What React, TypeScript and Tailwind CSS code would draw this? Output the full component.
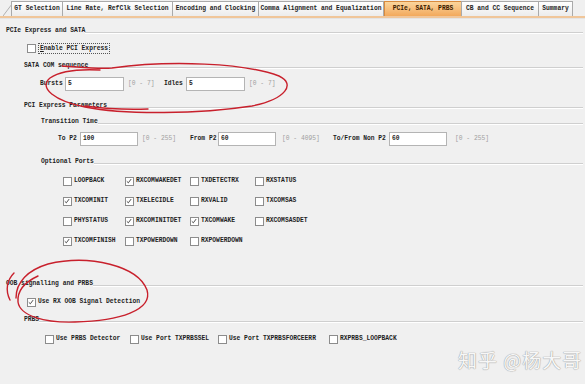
import React from 'react';

const font = { fontFamily: '"Liberation Mono", "DejaVu Sans Mono", monospace' };

const tabs = [
  { label: 'GT Selection', w: 52 },
  { label: 'Line Rate, RefClk Selection', w: 111 },
  { label: 'Encoding and Clocking', w: 87 },
  { label: 'Comma Alignment and Equalization', w: 126 },
  { label: 'PCIe, SATA, PRBS', w: 78, active: true },
  { label: 'CB and CC Sequence', w: 78 },
  { label: 'Summary', w: 35 },
];

function Box({ checked }: { checked?: boolean }) {
  return (
    <span className="relative inline-block w-[9px] h-[9px] shrink-0 border border-[#8c8c8c] bg-white">
      {checked && (
        <svg viewBox="0 0 9 9" className="absolute inset-0 w-[7px] h-[7px]">
          <path d="M1 4.2 L3 6.2 L6.6 1.4" fill="none" stroke="#333" strokeWidth="1.1" />
        </svg>
      )}
    </span>
  );
}

function Check({ label, checked }: { label: string; checked?: boolean }) {
  return (
    <div className="flex items-center gap-[2px] h-[12px]">
      <Box checked={checked} />
      <span className="whitespace-nowrap">{label}</span>
    </div>
  );
}

function Header({ title, indent, className = '' }: { title: string; indent: string; className?: string }) {
  return (
    <div className={`flex items-end h-[12px] pr-[2px] ${indent} ${className}`}>
      <span className="whitespace-nowrap leading-[12px]">{title}</span>
      <div className="flex-1 mb-[3px] border-t border-[#cfcfcf] border-b border-b-white" />
    </div>
  );
}

function Field({ value, w }: { value: string; w: string }) {
  return (
    <div className={`${w} h-[14px] bg-white border border-[#b4b4b4] pl-[2px] leading-[12px]`}>{value}</div>
  );
}

const ports: [string, boolean][][] = [
  [['LOOPBACK', false], ['RXCOMWAKEDET', true], ['TXDETECTRX', false], ['RXSTATUS', false]],
  [['TXCOMINIT', true], ['TXELECIDLE', true], ['RXVALID', false], ['TXCOMSAS', false]],
  [['PHYSTATUS', false], ['RXCOMINITDET', true], ['TXCOMWAKE', true], ['RXCOMSASDET', false]],
  [['TXCOMFINISH', true], ['TXPOWERDOWN', false], ['RXPOWERDOWN', false]],
];

export default function App() {
  return (
    <div
      className="relative w-[585px] h-[384px] overflow-hidden bg-[#f0f0f0] text-[6.3px] font-semibold text-[#1e1e1e]"
      style={font}
    >
      {/* tab strip */}
      <div className="flex items-end h-[18px] pl-[3px] border-b-2 border-[#f0c69a]">
        <div className="w-[9px] h-[15px] relative">
          <svg viewBox="0 0 9 15" className="absolute inset-0">
            <path d="M0 15 L9 3" stroke="#b0b0b0" strokeWidth="1" />
          </svg>
        </div>
        {tabs.map((t) => (
          <div
            key={t.label}
            className={`h-[15px] flex items-center justify-center border border-b-0 whitespace-nowrap ${
              t.active
                ? 'bg-gradient-to-b from-[#fbd59c] to-[#f2a95c] border-[#d98b3e] font-extrabold text-[#3a1a00]'
                : 'bg-gradient-to-b from-white to-[#ececec] border-[#aaaaaa] -ml-px'
            }`}
            style={{ width: t.w }}
          >
            {t.label}
          </div>
        ))}
      </div>
      <div className="h-px bg-[#e4e4e4]" />

      <Header title="PCIe Express and SATA" indent="pl-[6px]" className="mt-[6px]" />
      <div className="flex items-center gap-[2px] h-[12px] mt-[5px] pl-[27px]">
        <Box />
        <span className="border border-dotted border-[#555] px-px leading-[9px]">
          <span className="underline">E</span>nable PCI Express
        </span>
      </div>

      <Header title="SATA COM sequence" indent="pl-[24px]" className="mt-[6px]" />
      <div className="flex items-center h-[14px] mt-[5px] pl-[40px]">
        <span className="w-[25px]">Bursts</span>
        <Field value="5" w="w-[59px]" />
        <span className="ml-[4px] w-[36px] text-[#a0a0a0] font-normal">[0 - 7]</span>
        <span className="w-[22px]">Idles</span>
        <Field value="5" w="w-[59px]" />
        <span className="ml-[4px] text-[#a0a0a0] font-normal">[0 - 7]</span>
      </div>

      <Header title="PCI Express Parameters" indent="pl-[24px]" className="mt-[9px]" />
      <Header title="Transition Time" indent="pl-[41px]" className="mt-[4px]" />
      <div className="flex items-center h-[14px] mt-[4px] pl-[58px]">
        <span className="w-[22px]">To P2</span>
        <Field value="100" w="w-[58px]" />
        <span className="ml-[4px] w-[48px] text-[#a0a0a0] font-normal">[0 - 255]</span>
        <span className="w-[28px]">From P2</span>
        <Field value="60" w="w-[58px]" />
        <span className="ml-[6px] w-[51px] text-[#a0a0a0] font-normal">[0 - 4095]</span>
        <span className="w-[56px]">To/From Non P2</span>
        <Field value="60" w="w-[58px]" />
        <span className="ml-[8px] text-[#a0a0a0] font-normal">[0 - 255]</span>
      </div>

      <Header title="Optional Ports" indent="pl-[41px]" className="mt-[10px]" />
      <div className="grid grid-cols-[62px_65px_65px_auto] auto-rows-[20px] items-center pl-[63px] mt-[3px]">
        {ports.flat().map(([name, on]) => (
          <Check key={name} label={name} checked={on} />
        ))}
      </div>

      <Header title="OOB signalling and PRBS" indent="pl-[6px]" className="mt-[27px]" />
      <div className="mt-[6px] pl-[27px]">
        <Check label="Use RX OOB Signal Detection" checked />
      </div>
      <Header title="PRBS" indent="pl-[24px]" className="mt-[6px]" />
      <div className="flex items-center mt-[7px] pl-[45px]">
        <div className="w-[85px]"><Check label="Use PRBS Detector" /></div>
        <div className="w-[88px]"><Check label="Use Port TXPRBSSEL" /></div>
        <div className="w-[111px]"><Check label="Use Port TXPRBSFORCEERR" /></div>
        <Check label="RXPRBS_LOOPBACK" />
      </div>

      {/* watermark */}
      <div
        className="absolute left-[458px] top-[346px] whitespace-nowrap text-[19px] font-normal tracking-[1px] text-[#f7f7f7]"
        style={{
          fontFamily: '"Noto Sans CJK SC", sans-serif',
          textShadow: '0 0 1px #9a9a9a, 0 0 1px #9a9a9a',
        }}
      >
        知乎 @杨大哥
      </div>

      {/* hand-drawn annotations */}
      <svg className="absolute inset-0 pointer-events-none" width="585" height="384" viewBox="0 0 585 384">
        <g fill="none" stroke="#c8202c" strokeWidth="1.4" strokeLinecap="round">
          <path d="M62 66 C 80 67, 95 69, 112 68 C 170 60, 245 63, 279 76 C 296 84, 286 99, 252 106 C 200 114, 125 115, 85 107 C 55 101, 38 88, 50 78 C 60 71, 80 69, 100 70" />
          <path d="M85 106 C 100 108, 125 110, 148 109" />
          <path d="M10 300 C 5 290, 7 280, 14 273" />
          <path d="M16 298 C 16 282, 28 270, 48 264 C 90 254, 138 266, 147 290 C 153 310, 120 321, 75 322 C 45 323, 20 316, 18 302 C 17 290, 25 282, 38 276" />
        </g>
      </svg>
    </div>
  );
}
